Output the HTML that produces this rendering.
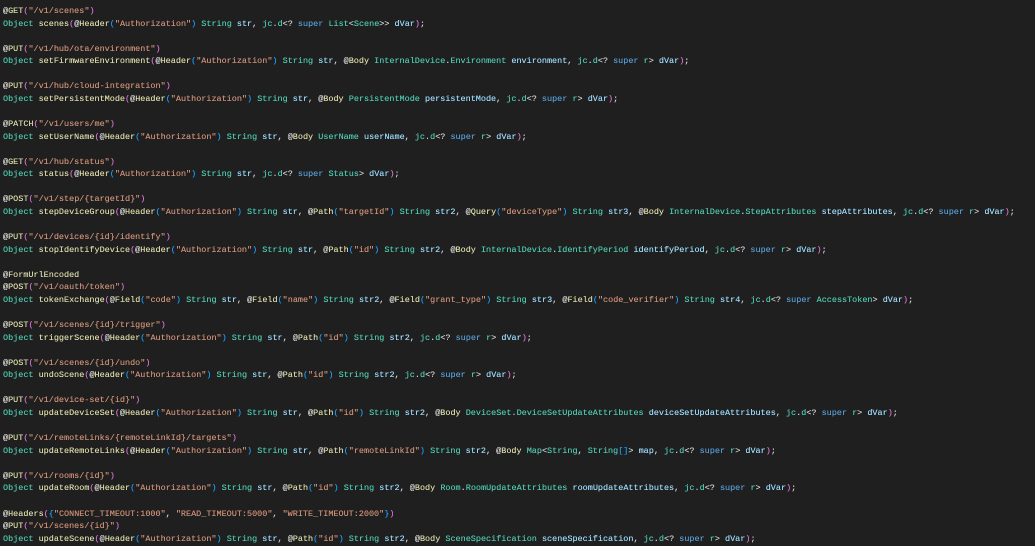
<!DOCTYPE html>
<html><head><meta charset="utf-8"><style>
html,body{margin:0;padding:0;background:#1f1f1f;width:1035px;height:546px;overflow:hidden}
pre{margin:0;position:absolute;left:3px;top:5px;font-family:"Liberation Mono",monospace;font-size:8.48px;line-height:12.57px;color:#d4d4d4;text-shadow:0 0 0.3px currentColor}
.t{color:#4ec9b0}.f{color:#dcdcaa}.s{color:#ce9178}.v{color:#9cdcfe}.k{color:#569cd6}.p{color:#da70d6}.b{color:#179fff}.a{color:#dcdcaa}
</style></head><body><pre>@<span class="a">GET</span><span class="p">(</span><span class="s">"/v1/scenes"</span><span class="p">)</span>
<span class="t">Object</span> <span class="f">scenes</span><span class="p">(</span>@<span class="a">Header</span><span class="b">(</span><span class="s">"Authorization"</span><span class="b">)</span> <span class="t">String</span> <span class="v">str</span>, <span class="t">jc</span>.<span class="t">d</span>&lt;? <span class="k">super</span> <span class="t">List</span>&lt;<span class="t">Scene</span>&gt;&gt; <span class="v">dVar</span><span class="p">)</span>;

@<span class="a">PUT</span><span class="p">(</span><span class="s">"/v1/hub/ota/environment"</span><span class="p">)</span>
<span class="t">Object</span> <span class="f">setFirmwareEnvironment</span><span class="p">(</span>@<span class="a">Header</span><span class="b">(</span><span class="s">"Authorization"</span><span class="b">)</span> <span class="t">String</span> <span class="v">str</span>, @<span class="a">Body</span> <span class="t">InternalDevice</span>.<span class="t">Environment</span> <span class="v">environment</span>, <span class="t">jc</span>.<span class="t">d</span>&lt;? <span class="k">super</span> <span class="t">r</span>&gt; <span class="v">dVar</span><span class="p">)</span>;

@<span class="a">PUT</span><span class="p">(</span><span class="s">"/v1/hub/cloud-integration"</span><span class="p">)</span>
<span class="t">Object</span> <span class="f">setPersistentMode</span><span class="p">(</span>@<span class="a">Header</span><span class="b">(</span><span class="s">"Authorization"</span><span class="b">)</span> <span class="t">String</span> <span class="v">str</span>, @<span class="a">Body</span> <span class="t">PersistentMode</span> <span class="v">persistentMode</span>, <span class="t">jc</span>.<span class="t">d</span>&lt;? <span class="k">super</span> <span class="t">r</span>&gt; <span class="v">dVar</span><span class="p">)</span>;

@<span class="a">PATCH</span><span class="p">(</span><span class="s">"/v1/users/me"</span><span class="p">)</span>
<span class="t">Object</span> <span class="f">setUserName</span><span class="p">(</span>@<span class="a">Header</span><span class="b">(</span><span class="s">"Authorization"</span><span class="b">)</span> <span class="t">String</span> <span class="v">str</span>, @<span class="a">Body</span> <span class="t">UserName</span> <span class="v">userName</span>, <span class="t">jc</span>.<span class="t">d</span>&lt;? <span class="k">super</span> <span class="t">r</span>&gt; <span class="v">dVar</span><span class="p">)</span>;

@<span class="a">GET</span><span class="p">(</span><span class="s">"/v1/hub/status"</span><span class="p">)</span>
<span class="t">Object</span> <span class="f">status</span><span class="p">(</span>@<span class="a">Header</span><span class="b">(</span><span class="s">"Authorization"</span><span class="b">)</span> <span class="t">String</span> <span class="v">str</span>, <span class="t">jc</span>.<span class="t">d</span>&lt;? <span class="k">super</span> <span class="t">Status</span>&gt; <span class="v">dVar</span><span class="p">)</span>;

@<span class="a">POST</span><span class="p">(</span><span class="s">"/v1/step/{targetId}"</span><span class="p">)</span>
<span class="t">Object</span> <span class="f">stepDeviceGroup</span><span class="p">(</span>@<span class="a">Header</span><span class="b">(</span><span class="s">"Authorization"</span><span class="b">)</span> <span class="t">String</span> <span class="v">str</span>, @<span class="a">Path</span><span class="b">(</span><span class="s">"targetId"</span><span class="b">)</span> <span class="t">String</span> <span class="v">str2</span>, @<span class="a">Query</span><span class="b">(</span><span class="s">"deviceType"</span><span class="b">)</span> <span class="t">String</span> <span class="v">str3</span>, @<span class="a">Body</span> <span class="t">InternalDevice</span>.<span class="t">StepAttributes</span> <span class="v">stepAttributes</span>, <span class="t">jc</span>.<span class="t">d</span>&lt;? <span class="k">super</span> <span class="t">r</span>&gt; <span class="v">dVar</span><span class="p">)</span>;

@<span class="a">PUT</span><span class="p">(</span><span class="s">"/v1/devices/{id}/identify"</span><span class="p">)</span>
<span class="t">Object</span> <span class="f">stopIdentifyDevice</span><span class="p">(</span>@<span class="a">Header</span><span class="b">(</span><span class="s">"Authorization"</span><span class="b">)</span> <span class="t">String</span> <span class="v">str</span>, @<span class="a">Path</span><span class="b">(</span><span class="s">"id"</span><span class="b">)</span> <span class="t">String</span> <span class="v">str2</span>, @<span class="a">Body</span> <span class="t">InternalDevice</span>.<span class="t">IdentifyPeriod</span> <span class="v">identifyPeriod</span>, <span class="t">jc</span>.<span class="t">d</span>&lt;? <span class="k">super</span> <span class="t">r</span>&gt; <span class="v">dVar</span><span class="p">)</span>;

@<span class="a">FormUrlEncoded</span>
@<span class="a">POST</span><span class="p">(</span><span class="s">"/v1/oauth/token"</span><span class="p">)</span>
<span class="t">Object</span> <span class="f">tokenExchange</span><span class="p">(</span>@<span class="a">Field</span><span class="b">(</span><span class="s">"code"</span><span class="b">)</span> <span class="t">String</span> <span class="v">str</span>, @<span class="a">Field</span><span class="b">(</span><span class="s">"name"</span><span class="b">)</span> <span class="t">String</span> <span class="v">str2</span>, @<span class="a">Field</span><span class="b">(</span><span class="s">"grant_type"</span><span class="b">)</span> <span class="t">String</span> <span class="v">str3</span>, @<span class="a">Field</span><span class="b">(</span><span class="s">"code_verifier"</span><span class="b">)</span> <span class="t">String</span> <span class="v">str4</span>, <span class="t">jc</span>.<span class="t">d</span>&lt;? <span class="k">super</span> <span class="t">AccessToken</span>&gt; <span class="v">dVar</span><span class="p">)</span>;

@<span class="a">POST</span><span class="p">(</span><span class="s">"/v1/scenes/{id}/trigger"</span><span class="p">)</span>
<span class="t">Object</span> <span class="f">triggerScene</span><span class="p">(</span>@<span class="a">Header</span><span class="b">(</span><span class="s">"Authorization"</span><span class="b">)</span> <span class="t">String</span> <span class="v">str</span>, @<span class="a">Path</span><span class="b">(</span><span class="s">"id"</span><span class="b">)</span> <span class="t">String</span> <span class="v">str2</span>, <span class="t">jc</span>.<span class="t">d</span>&lt;? <span class="k">super</span> <span class="t">r</span>&gt; <span class="v">dVar</span><span class="p">)</span>;

@<span class="a">POST</span><span class="p">(</span><span class="s">"/v1/scenes/{id}/undo"</span><span class="p">)</span>
<span class="t">Object</span> <span class="f">undoScene</span><span class="p">(</span>@<span class="a">Header</span><span class="b">(</span><span class="s">"Authorization"</span><span class="b">)</span> <span class="t">String</span> <span class="v">str</span>, @<span class="a">Path</span><span class="b">(</span><span class="s">"id"</span><span class="b">)</span> <span class="t">String</span> <span class="v">str2</span>, <span class="t">jc</span>.<span class="t">d</span>&lt;? <span class="k">super</span> <span class="t">r</span>&gt; <span class="v">dVar</span><span class="p">)</span>;

@<span class="a">PUT</span><span class="p">(</span><span class="s">"/v1/device-set/{id}"</span><span class="p">)</span>
<span class="t">Object</span> <span class="f">updateDeviceSet</span><span class="p">(</span>@<span class="a">Header</span><span class="b">(</span><span class="s">"Authorization"</span><span class="b">)</span> <span class="t">String</span> <span class="v">str</span>, @<span class="a">Path</span><span class="b">(</span><span class="s">"id"</span><span class="b">)</span> <span class="t">String</span> <span class="v">str2</span>, @<span class="a">Body</span> <span class="t">DeviceSet</span>.<span class="t">DeviceSetUpdateAttributes</span> <span class="v">deviceSetUpdateAttributes</span>, <span class="t">jc</span>.<span class="t">d</span>&lt;? <span class="k">super</span> <span class="t">r</span>&gt; <span class="v">dVar</span><span class="p">)</span>;

@<span class="a">PUT</span><span class="p">(</span><span class="s">"/v1/remoteLinks/{remoteLinkId}/targets"</span><span class="p">)</span>
<span class="t">Object</span> <span class="f">updateRemoteLinks</span><span class="p">(</span>@<span class="a">Header</span><span class="b">(</span><span class="s">"Authorization"</span><span class="b">)</span> <span class="t">String</span> <span class="v">str</span>, @<span class="a">Path</span><span class="b">(</span><span class="s">"remoteLinkId"</span><span class="b">)</span> <span class="t">String</span> <span class="v">str2</span>, @<span class="a">Body</span> <span class="t">Map</span>&lt;<span class="t">String</span>, <span class="t">String</span><span class="b">[]</span>&gt; <span class="v">map</span>, <span class="t">jc</span>.<span class="t">d</span>&lt;? <span class="k">super</span> <span class="t">r</span>&gt; <span class="v">dVar</span><span class="p">)</span>;

@<span class="a">PUT</span><span class="p">(</span><span class="s">"/v1/rooms/{id}"</span><span class="p">)</span>
<span class="t">Object</span> <span class="f">updateRoom</span><span class="p">(</span>@<span class="a">Header</span><span class="b">(</span><span class="s">"Authorization"</span><span class="b">)</span> <span class="t">String</span> <span class="v">str</span>, @<span class="a">Path</span><span class="b">(</span><span class="s">"id"</span><span class="b">)</span> <span class="t">String</span> <span class="v">str2</span>, @<span class="a">Body</span> <span class="t">Room</span>.<span class="t">RoomUpdateAttributes</span> <span class="v">roomUpdateAttributes</span>, <span class="t">jc</span>.<span class="t">d</span>&lt;? <span class="k">super</span> <span class="t">r</span>&gt; <span class="v">dVar</span><span class="p">)</span>;

@<span class="a">Headers</span><span class="p">(</span><span class="b">{</span><span class="s">"CONNECT_TIMEOUT:1000"</span>, <span class="s">"READ_TIMEOUT:5000"</span>, <span class="s">"WRITE_TIMEOUT:2000"</span><span class="b">}</span><span class="p">)</span>
@<span class="a">PUT</span><span class="p">(</span><span class="s">"/v1/scenes/{id}"</span><span class="p">)</span>
<span class="t">Object</span> <span class="f">updateScene</span><span class="p">(</span>@<span class="a">Header</span><span class="b">(</span><span class="s">"Authorization"</span><span class="b">)</span> <span class="t">String</span> <span class="v">str</span>, @<span class="a">Path</span><span class="b">(</span><span class="s">"id"</span><span class="b">)</span> <span class="t">String</span> <span class="v">str2</span>, @<span class="a">Body</span> <span class="t">SceneSpecification</span> <span class="v">sceneSpecification</span>, <span class="t">jc</span>.<span class="t">d</span>&lt;? <span class="k">super</span> <span class="t">r</span>&gt; <span class="v">dVar</span><span class="p">)</span>;</pre></body></html>
